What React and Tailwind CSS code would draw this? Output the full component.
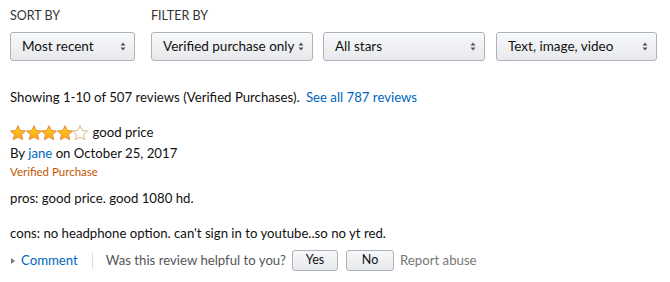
import React from "react";

const Star = ({ filled }) => (
  <svg width="16" height="16" viewBox="0 0 24 24" className="block -mr-[0.5px]">
    <defs>
      <linearGradient id="starFill" x1="0" y1="0" x2="0" y2="1">
        <stop offset="0%" stopColor="#ffd21a" />
        <stop offset="100%" stopColor="#ffa41c" />
      </linearGradient>
    </defs>
    <path
      d="M12 1l3.3 7.2 7.9.8-5.9 5.3 1.7 7.7L12 18.1l-7 3.9 1.7-7.7L.8 9l7.9-.8z"
      fill={filled ? "url(#starFill)" : "#fff"}
      stroke={filled ? "#de7921" : "#c9a46a"}
      strokeWidth="1.2"
      strokeLinejoin="round"
    />
  </svg>
);

const Dropdown = ({ label, className }) => (
  <div
    className={`flex items-center justify-between h-[29px] pl-[11px] pr-[8px] rounded-[3px] border border-[#adb1b8] bg-gradient-to-b from-[#f7f8fa] to-[#e7e9ec] shadow-[0_1px_0_rgba(255,255,255,0.6)_inset] text-[13.5px] text-[#111] whitespace-nowrap ${className}`}
  >
    <span>{label}</span>
    <svg width="6" height="9" viewBox="0 0 6 9">
      <path d="M3 0.5L5.5 3.5H0.5z" fill="#555" />
      <path d="M3 8.5L5.5 5.5H0.5z" fill="#555" />
    </svg>
  </div>
);

const App = () => {
  return (
    <div
      className="w-[670px] h-[282px] bg-white text-[#111] overflow-hidden"
      style={{ fontFamily: 'Lato, "Noto Sans", sans-serif' }}
    >
      <div className="pl-[10px] pt-[6px]">
        {/* Sort / filter bar */}
        <div className="flex text-[12.5px] text-[#333] h-[20px] items-center">
          <span className="w-[141px]">SORT BY</span>
          <span>FILTER BY</span>
        </div>
        <div className="flex mt-[6px] gap-[10px]">
          <Dropdown label="Most recent" className="w-[125px]" />
          <Dropdown label="Verified purchase only" className="w-[162px] ml-[6px]" />
          <Dropdown label="All stars" className="w-[162px]" />
          <Dropdown label="Text, image, video" className="w-[161px] ml-[1px]" />
        </div>

        {/* Count */}
        <div className="mt-[27px] text-[13.2px] leading-[18px]">
          Showing 1-10 of 507 reviews (Verified Purchases).{" "}
          <span className="text-[#0066c0] ml-[3px]">See all 787 reviews</span>
        </div>

        {/* Review */}
        <div className="mt-[18px]">
          <div className="flex items-center h-[18px]">
            <div className="flex">
              <Star filled />
              <Star filled />
              <Star filled />
              <Star filled />
              <Star />
            </div>
            <span className="ml-[5px] text-[13.2px]">good price</span>
          </div>
          <div className="text-[13.2px] leading-[19px] mt-[2px]">
            By <span className="text-[#0066c0]">jane</span> on October 25, 2017
          </div>
          <div className="text-[11.5px] leading-[16px] text-[#c45500] mt-[1px]">
            Verified Purchase
          </div>
          <div className="text-[13.2px] leading-[18px] mt-[9px]">
            pros: good price. good 1080 hd.
          </div>
          <div className="text-[13.2px] leading-[18px] mt-[17px]">
            cons: no headphone option. can't sign in to youtube..so no yt red.
          </div>

          {/* Actions */}
          <div className="flex items-center mt-[8px] text-[13.2px] h-[21px]">
            <svg width="6" height="8" viewBox="0 0 6 8" className="ml-[0px] mr-[5px]">
              <path d="M1 1L5 4L1 7z" fill="#777" />
            </svg>
            <span className="text-[#0066c0]">Comment</span>
            <span className="w-px h-[16px] bg-[#ddd] ml-[14px] mr-[13px]" />
            <span className="text-[#555]">Was this review helpful to you?</span>
            <div className="ml-[6px] w-[46px] h-[21px] flex items-center justify-center rounded-[3px] border border-[#adb1b8] bg-gradient-to-b from-[#f7f8fa] to-[#e7e9ec] text-[12.5px]">
              Yes
            </div>
            <div className="ml-[8px] w-[48px] h-[21px] flex items-center justify-center rounded-[3px] border border-[#adb1b8] bg-gradient-to-b from-[#f7f8fa] to-[#e7e9ec] text-[12.5px]">
              No
            </div>
            <span className="ml-[6px] text-[#777]">Report abuse</span>
          </div>
        </div>
      </div>
    </div>
  );
};

export default App;
